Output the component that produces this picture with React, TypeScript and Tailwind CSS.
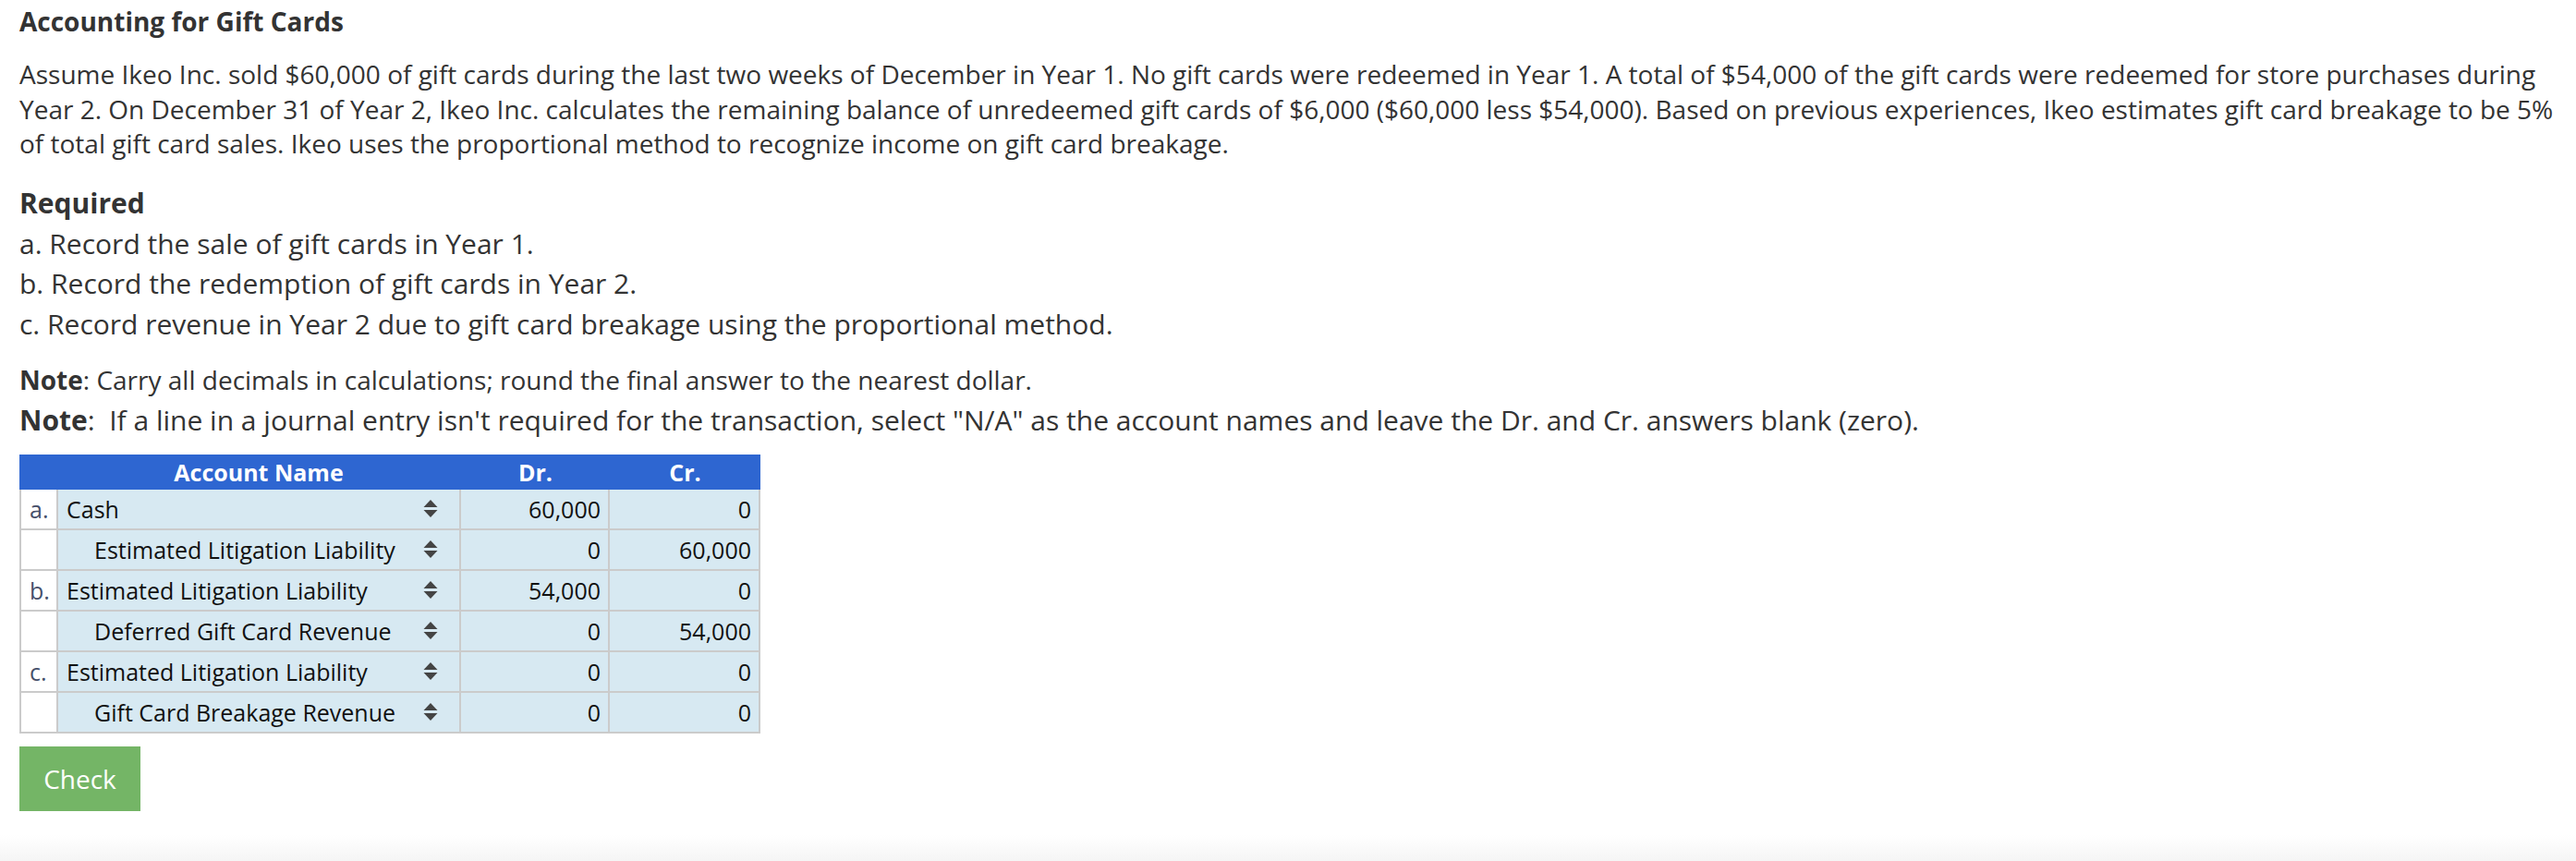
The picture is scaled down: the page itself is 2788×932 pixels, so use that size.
import { type ReactNode } from "react";

const ROWS = [
  { label: "a.", account: "Cash", indent: false, dr: "60,000", cr: "0" },
  { label: "", account: "Estimated Litigation Liability", indent: true, dr: "0", cr: "60,000" },
  { label: "b.", account: "Estimated Litigation Liability", indent: false, dr: "54,000", cr: "0" },
  { label: "", account: "Deferred Gift Card Revenue", indent: true, dr: "0", cr: "54,000" },
  { label: "c.", account: "Estimated Litigation Liability", indent: false, dr: "0", cr: "0" },
  { label: "", account: "Gift Card Breakage Revenue", indent: true, dr: "0", cr: "0" },
];

function SortArrows() {
  return (
    <svg width="16" height="19" viewBox="0 0 16 19" className="shrink-0">
      <path d="M8 0 L15.5 8 L0.5 8 Z" fill="#444" />
      <path d="M0.5 11 L15.5 11 L8 19 Z" fill="#444" />
    </svg>
  );
}

function Note({ children, big }: { children: ReactNode; big?: boolean }) {
  return (
    <p className={big ? "text-[30px] leading-[43.5px]" : "text-[28px] leading-[37.5px]"}>
      <span className="font-bold">Note</span>
      {children}
    </p>
  );
}

export default function App() {
  return (
    <div
      className="min-h-[932px] flex flex-col bg-white text-[#333]"
      style={{ fontFamily: '"Open Sans", "Noto Sans", sans-serif' }}
    >
      <div className="pl-[21px] pr-[8px] pt-[5px]">
        <h1 className="text-[28px] leading-[37.5px] font-bold">Accounting for Gift Cards</h1>

        <p className="mt-[19.5px] text-[28px] leading-[37.5px]">
          Assume Ikeo Inc. sold $60,000 of gift cards during the last two weeks of December in Year 1. No gift
          cards were redeemed in Year 1. A total of $54,000 of the gift cards were redeemed for store purchases
          during Year 2. On December 31 of Year 2, Ikeo Inc. calculates the remaining balance of unredeemed gift
          cards of $6,000 ($60,000 less $54,000). Based on previous experiences, Ikeo estimates gift card breakage
          to be 5% of total gift card sales. Ikeo uses the proportional method to recognize income on gift card
          breakage.
        </p>

        <div className="mt-[23.5px] text-[30px] leading-[43.5px]">
          <p className="font-bold">Required</p>
          <p>a. Record the sale of gift cards in Year 1.</p>
          <p>b. Record the redemption of gift cards in Year 2.</p>
          <p>c. Record revenue in Year 2 due to gift card breakage using the proportional method.</p>
        </div>

        <div className="mt-[21px]">
          <Note>: Carry all decimals in calculations; round the final answer to the nearest dollar.</Note>
          <div className="mt-[2.5px]">
            <Note big>
              :&nbsp; If a line in a journal entry isn't required for the transaction, select "N/A" as the account
              names and leave the Dr. and Cr. answers blank (zero).
            </Note>
          </div>
        </div>

        {/* journal table */}
        <div className="mt-[15px] w-[802px] text-[25px]">
          <div className="grid grid-cols-[40px_438px_161px_163px] h-[38px] items-center bg-[#2e66d1] text-white font-bold leading-[38px]">
            <div />
            <div className="text-center">Account Name</div>
            <div className="text-center">Dr.</div>
            <div className="text-center">Cr.</div>
          </div>
          <div className="grid gap-[2px] bg-[#cbcbcb] px-[2px] pb-[2px]">
            {ROWS.map((r, i) => (
              <div key={i} className="grid grid-cols-[38px_434px_159px_161px] gap-x-[2px] h-[42px] leading-[42px]">
                <div className="bg-white pl-[9px] text-[#46506a]">{r.label}</div>
                <div className="bg-[#d7e9f2] flex items-center justify-between pr-[23px] text-[#111]">
                  <span className={r.indent ? "pl-[39px]" : "pl-[9px]"}>{r.account}</span>
                  <SortArrows />
                </div>
                <div className="bg-[#d7e9f2] text-right pr-[8px] text-[#111]">{r.dr}</div>
                <div className="bg-[#d7e9f2] text-right pr-[8px] text-[#111]">{r.cr}</div>
              </div>
            ))}
          </div>
        </div>

        <button className="mt-[14px] w-[131px] h-[70px] bg-[#74b566] text-white text-[28px]">Check</button>
      </div>

      <div className="mt-auto h-[28px] bg-gradient-to-b from-white to-[#f5f5f5]" />
    </div>
  );
}
